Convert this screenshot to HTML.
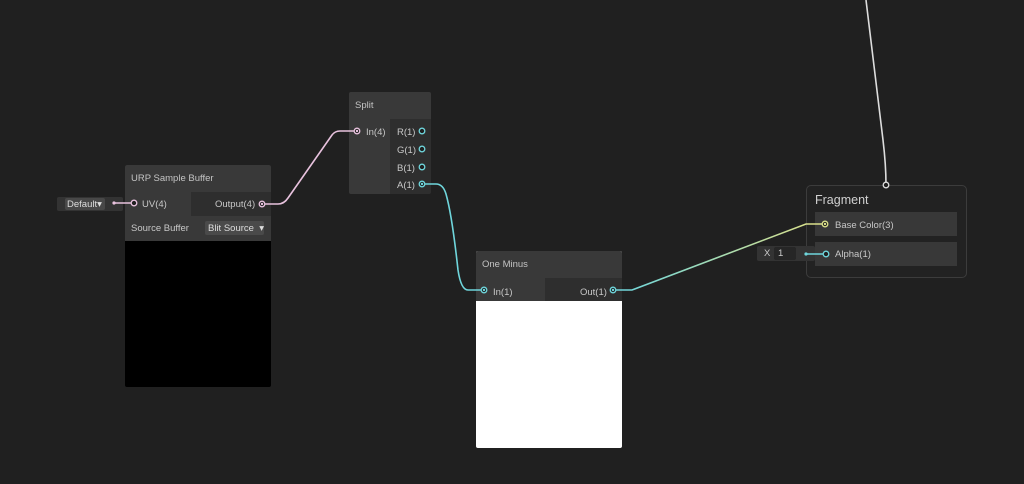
<!DOCTYPE html>
<html><head><meta charset="utf-8"><style>
*{margin:0;padding:0;box-sizing:border-box}
body{width:1024px;height:484px;background:#202020;position:relative;overflow:hidden;font-family:"Liberation Sans",sans-serif;font-size:9.5px;color:#c8c8c8}
.a{position:absolute}
.title{background:#393939;color:#c4c4c4;font-size:9.5px;padding-left:6px;display:flex;align-items:center}
.l{background:#393939}
.r{background:#2e2e2e}
.t{position:absolute;white-space:nowrap}
</style></head><body>
<div class="a" style="left:125px;top:165px;width:146px;height:222px;background:#000;border-radius:2px;overflow:hidden">
 <div class="a title" style="left:0;top:0;width:146px;height:27px">URP Sample Buffer</div>
 <div class="a l" style="left:0;top:27px;width:66px;height:24px"></div>
 <div class="a r" style="left:66px;top:27px;width:80px;height:24px"></div>
 <div class="a" style="left:0;top:51px;width:146px;height:25px;background:#393939"></div>
</div>
<div class="t" style="left:142px;top:199px">UV(4)</div>
<div class="t" style="left:215px;top:199px">Output(4)</div>
<div class="t" style="left:131px;top:223px">Source Buffer</div>
<div class="a" style="left:205px;top:221px;width:59px;height:14px;background:#4a4a4a;border-radius:2px"></div>
<div class="t" style="left:208px;top:223px;color:#ddd">Blit Source &nbsp;▾</div>
<div class="a" style="left:57px;top:197px;width:66px;height:14px;background:#333;border-radius:2px"></div>
<div class="a" style="left:65px;top:198px;width:40px;height:12px;background:#484848;border-radius:2px"></div>
<div class="t" style="left:67px;top:199px;color:#ddd">Default▾</div>
<div class="a" style="left:349px;top:92px;width:82px;height:102px;border-radius:2px;overflow:hidden">
 <div class="a title" style="left:0;top:0;width:82px;height:27px">Split</div>
 <div class="a l" style="left:0;top:27px;width:41px;height:75px"></div>
 <div class="a r" style="left:41px;top:27px;width:41px;height:75px"></div>
</div>
<div class="t" style="left:366px;top:127px">In(4)</div>
<div class="t" style="left:397px;top:127px">R(1)</div>
<div class="t" style="left:397px;top:145px">G(1)</div>
<div class="t" style="left:397px;top:163px">B(1)</div>
<div class="t" style="left:397px;top:180px">A(1)</div>
<div class="a" style="left:476px;top:251px;width:146px;height:197px;background:#fff;border-radius:2px;overflow:hidden">
 <div class="a title" style="left:0;top:0;width:146px;height:27px">One Minus</div>
 <div class="a l" style="left:0;top:27px;width:69px;height:23px"></div>
 <div class="a r" style="left:69px;top:27px;width:77px;height:23px"></div>
</div>
<div class="t" style="left:493px;top:287px">In(1)</div>
<div class="t" style="left:580px;top:287px">Out(1)</div>
<div class="a" style="left:806px;top:185px;width:161px;height:93px;background:#222;border:1px solid #3c3c3c;border-radius:5px"></div>
<div class="t" style="left:815px;top:193px;font-size:12.5px;color:#d0d0d0">Fragment</div>
<div class="a" style="left:815px;top:212px;width:142px;height:24px;background:#383838"></div>
<div class="a" style="left:815px;top:242px;width:142px;height:24px;background:#383838"></div>
<div class="t" style="left:835px;top:220px">Base Color(3)</div>
<div class="t" style="left:835px;top:249px">Alpha(1)</div>
<div class="a" style="left:757px;top:246px;width:58px;height:15px;background:#333;border-radius:2px"></div>
<div class="a" style="left:774px;top:247px;width:22px;height:13px;background:#262626;border-radius:2px"></div>
<div class="t" style="left:764px;top:248px;color:#ccc">X</div>
<div class="t" style="left:778px;top:248px;color:#ccc">1</div>
<svg class="a" style="left:0;top:0" width="1024" height="484">
<defs><linearGradient id="g" gradientUnits="userSpaceOnUse" x1="620" y1="290" x2="815" y2="224"><stop offset="0" stop-color="#6fd6dc"/><stop offset="1" stop-color="#dbe08a"/></linearGradient></defs>
<g fill="none" stroke-width="1.6">
<path d="M114 203 H134" stroke="#e8c2de"/>
<path d="M262 204 H278 Q284 204 288 198 L332 135 Q335 131 340 131 H357" stroke="#e8c2de"/>
<path d="M422 184 H436 Q443 184 446 194 Q452 215 458 270 Q461 290 468 290 H484" stroke="#6fd6dc"/>
<path d="M613 290 H632 L806 224 H825" stroke="url(#g)"/>
<path d="M806 254 H826" stroke="#6fd6dc"/>
<path d="M866 0 L883 140 Q886 165 886 185" stroke="#ddd"/>
</g>
<g stroke-width="1.3" fill="#202020">
<circle cx="134" cy="203" r="2.8" stroke="#e8c2de"/>
<circle cx="262" cy="204" r="2.8" stroke="#e8c2de"/><circle cx="262" cy="204" r="1.2" fill="#e8c2de" stroke="none"/>
<circle cx="357" cy="131" r="2.8" stroke="#e8c2de"/><circle cx="357" cy="131" r="1.2" fill="#e8c2de" stroke="none"/>
<circle cx="422" cy="131" r="2.8" stroke="#6fd6dc"/>
<circle cx="422" cy="149" r="2.8" stroke="#6fd6dc"/>
<circle cx="422" cy="167" r="2.8" stroke="#6fd6dc"/>
<circle cx="422" cy="184" r="2.8" stroke="#6fd6dc"/><circle cx="422" cy="184" r="1.2" fill="#6fd6dc" stroke="none"/>
<circle cx="484" cy="290" r="2.8" stroke="#6fd6dc"/><circle cx="484" cy="290" r="1.2" fill="#6fd6dc" stroke="none"/>
<circle cx="613" cy="290" r="2.8" stroke="#6fd6dc"/><circle cx="613" cy="290" r="1.2" fill="#6fd6dc" stroke="none"/>
<circle cx="825" cy="224" r="2.8" stroke="#dbe08a"/><circle cx="825" cy="224" r="1.2" fill="#dbe08a" stroke="none"/>
<circle cx="826" cy="254" r="2.8" stroke="#6fd6dc"/>
<circle cx="886" cy="185" r="2.8" stroke="#ddd"/>
</g>
<circle cx="114" cy="203" r="1.6" fill="#e8c2de"/>
<circle cx="806" cy="254" r="1.6" fill="#6fd6dc"/>
</svg>
</body></html>
